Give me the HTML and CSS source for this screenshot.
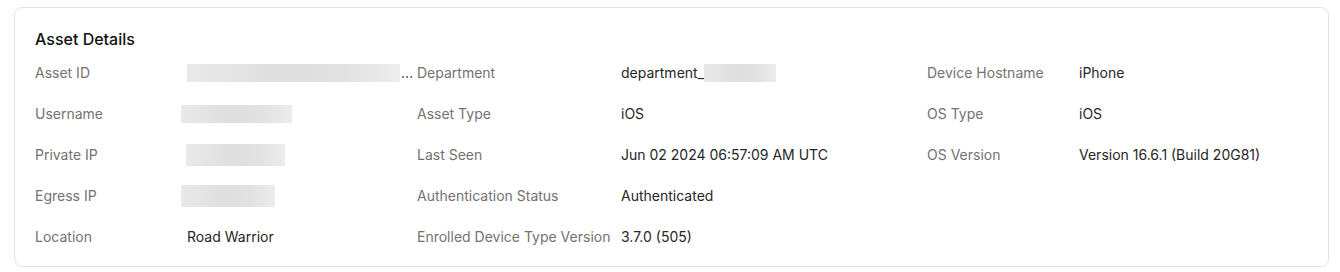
FILE: index.html
```html
<!DOCTYPE html>
<html lang="en">
<head>
    <meta charset="UTF-8">
    <meta name="viewport" content="width=device-width, initial-scale=1.0">
    <title>Asset Details</title>
    <link rel="stylesheet" href="styles.css">
</head>
<body>
    <section class="card">
        <h2 class="card-title">Asset Details</h2>
        <div class="details">
            <!-- row 1 -->
            <div class="label">Asset ID</div>
            <div class="value"><span class="redact redact-id"></span>…</div>
            <div class="label">Department</div>
            <div class="value">department_<span class="redact redact-dept"></span></div>
            <div class="label">Device Hostname</div>
            <div class="value">iPhone</div>

            <!-- row 2 -->
            <div class="label">Username</div>
            <div class="value"><span class="redact redact-user"></span></div>
            <div class="label">Asset Type</div>
            <div class="value">iOS</div>
            <div class="label">OS Type</div>
            <div class="value">iOS</div>

            <!-- row 3 -->
            <div class="label">Private IP</div>
            <div class="value"><span class="redact redact-private"></span></div>
            <div class="label">Last Seen</div>
            <div class="value">Jun 02 2024 06:57:09 AM UTC</div>
            <div class="label">OS Version</div>
            <div class="value">Version 16.6.1 (Build 20G81)</div>

            <!-- row 4 -->
            <div class="label">Egress IP</div>
            <div class="value"><span class="redact redact-egress"></span></div>
            <div class="label">Authentication Status</div>
            <div class="value">Authenticated</div>
            <div class="label"></div>
            <div class="value"></div>

            <!-- row 5 -->
            <div class="label">Location</div>
            <div class="value">Road Warrior</div>
            <div class="label">Enrolled Device Type Version</div>
            <div class="value">3.7.0 (505)</div>
            <div class="label"></div>
            <div class="value"></div>
        </div>
    </section>
</body>
</html>
```

FILE: styles.css
```css
html, body {
    margin: 0;
    padding: 0;
    background: #fff;
    font-family: Inter, 'Noto Sans', sans-serif;
}

body {
    padding: 7px 11px 0 14px;
}

.card {
    border: 1px solid #e4e4e4;
    border-radius: 8px;
    padding: 20px 20px 9px;
    background: #fff;
}

.card-title {
    margin: 0 0 2px;
    font-size: 16px;
    line-height: 22px;
    font-weight: 500;
    color: #111;
}

.details {
    display: grid;
    grid-template-columns: 152px 230px 204px 306px 152px 1fr;
    grid-auto-rows: 41px;
    align-items: center;
    font-size: 14px;
    line-height: 20px;
}

.label {
    color: #727272;
}

.value {
    color: #262626;
    display: flex;
    align-items: center;
    white-space: nowrap;
}

/* blurred / redacted values */
.redact {
    display: inline-block;
    height: 18px;
    background: linear-gradient(90deg, #e9e9e9, #dedede 45%, #e2e2e2 75%, #ececec);
}
.redact-id {
    width: 213px;
    margin-right: 1px;
}
.redact-dept {
    width: 72px;
}
.redact-user {
    width: 111px;
    margin-left: -6px;
}
.redact-private {
    width: 99px;
    height: 22px;
    margin-left: -1px;
}
.redact-egress {
    width: 94px;
    height: 22px;
    margin-left: -6px;
}
```
